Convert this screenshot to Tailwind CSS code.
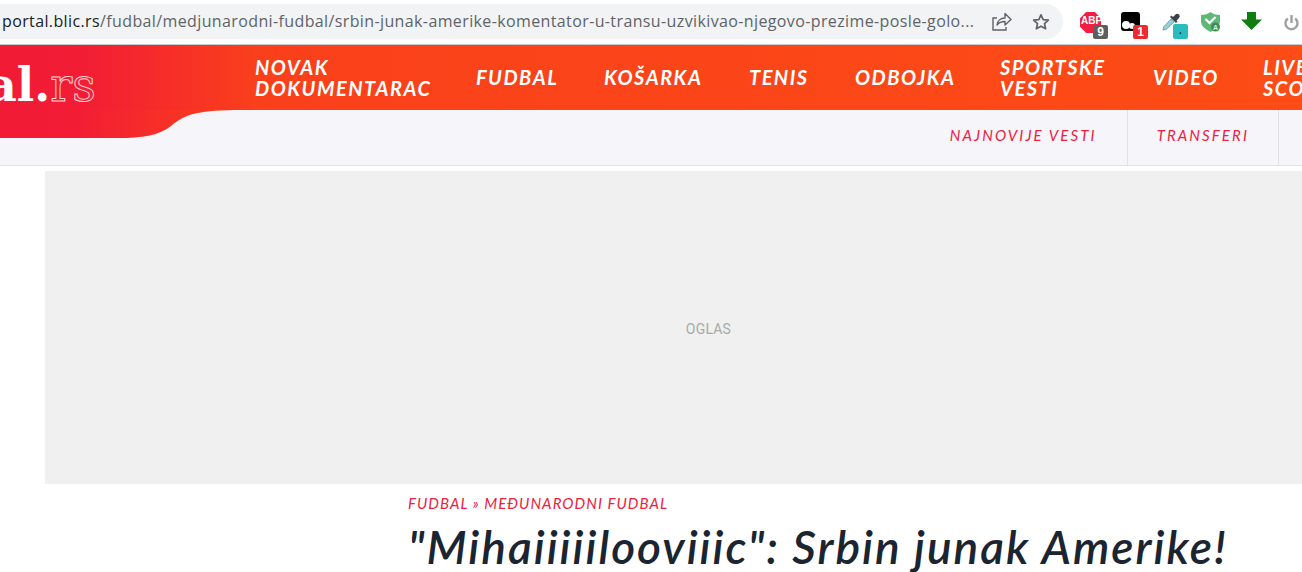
<!DOCTYPE html>
<html><head><meta charset="utf-8"><script src="https://cdn.jsdelivr.net/npm/@tailwindcss/browser@4"></script></head>
<body class="bg-white overflow-hidden font-['Open_Sans',sans-serif]">
<div class="w-[1302px] h-[572px] overflow-hidden relative">
  <div class="h-[45px] bg-white border-b border-[#c8cacc] flex items-start">
    <div class="w-[1063px] shrink-0 h-[35px] mt-[4px] bg-[#f1f3f4] rounded-r-full flex items-center justify-between pl-[2px] pr-[13px]">
      <div class="text-[16px] leading-[24px] mb-[2px] text-[#5f6368] whitespace-nowrap tracking-[0.38px] w-[975px] overflow-hidden"><span class="text-[#202124]">portal.blic.rs</span>/fudbal/medjunarodni-fudbal/srbin-junak-amerike-komentator-u-transu-uzvikivao-njegovo-prezime-posle-golo...</div>
      <div class="flex items-center gap-[20px]">
        <svg class="w-[20px] h-[19px]" viewBox="0 0 20 19" fill="none" stroke="#5f6368" stroke-width="1.400"><path d="M5 6H1v12h13v-3" stroke-linejoin="miter"/><path d="M5 13c.5-4 3.500-7 8-7V1.500l6 6-6 5.500V9.500c-3.500 0-6 1-8 3.500z" stroke-linejoin="round"/></svg>
        <svg class="w-[18px] h-[18px]" viewBox="0 0 20 20" fill="none" stroke="#5f6368" stroke-width="1.900"><path d="M10 2l2.400 5.300 5.800.6-4.300 3.900 1.200 5.700-5.100-2.900-5.100 2.900 1.200-5.700L1.800 7.900l5.800-.6z" stroke-linejoin="round"/></svg>
      </div>
    </div>
    <div class="flex items-start mt-[12px] ml-[17px]">
      <div class="relative w-[28px] h-[27px]">
        <svg class="w-[21px] h-[21px]" viewBox="0 0 22 22"><path d="M6.500 0h9L22 6.500v9L15.500 22h-9L0 15.500v-9z" fill="#f21d43"/></svg>
        <span class="absolute left-[1px] top-[3px] text-[10px] leading-[12px] font-bold text-white font-['Liberation_Sans',sans-serif]">ABP</span>
        <span class="absolute left-[13px] top-[13px] w-[15px] h-[14px] bg-[#5f5f5f] rounded-[2px] text-white text-[12px] leading-[14px] font-bold text-center font-['Liberation_Sans',sans-serif]">9</span>
      </div>
      <div class="relative w-[27px] h-[27px] ml-[13px]">
        <div class="absolute left-0 top-0 w-[19px] h-[19px] bg-black rounded-[3px]"></div>
        <div class="absolute left-[1px] top-[9px] w-[8px] h-[8px] bg-white rounded-full"></div>
        <div class="absolute left-[8px] top-[11px] w-[6px] h-[6px] bg-white rounded-full"></div>
        <span class="absolute left-[12px] top-[13px] w-[15px] h-[14px] bg-[#ee2a2e] rounded-[2px] text-white text-[12px] leading-[14px] font-bold text-center font-['Liberation_Sans',sans-serif]">1</span>
      </div>
      <div class="relative w-[26px] h-[27px] ml-[14px]">
        <svg class="absolute left-0 top-0 w-[19px] h-[19px]" viewBox="0 0 19 19"><path d="M1 18l.500-3L9 7l3 3-8 7.500z" fill="#8fd3dc" stroke="#6f8f96" stroke-width="0.800"/><path d="M8 5l6 6 1.500-1.500-1-1 2.500-2.500a2.300 2.300 0 0 0-3.500-3.500L11 5 9.500 3.500z" fill="#3c4043"/></svg>
        <span class="absolute left-[11px] top-[12px] w-[15px] h-[15px] bg-[#2bbcc0] rounded-[2px] text-[#123] text-[10px] leading-[13px] font-bold text-center font-['Liberation_Sans',sans-serif]">.</span>
      </div>
      <svg class="w-[20px] h-[20px] ml-[13px]" viewBox="0 0 20 20"><path d="M0 3c4 0 7-1 9.500-3C12 2 15 3 19 3v6c0 5-4 8-9.500 11C4 17 0 14 0 9z" fill="#5fb878"/><path d="M4.500 7l4 4 6-6" stroke="#fff" stroke-width="2.200" fill="none"/><circle cx="14.500" cy="15" r="4.500" fill="#3f8f58"/><text x="14.500" y="17.500" font-size="7" font-weight="700" fill="#d8f0de" text-anchor="middle" font-family="Liberation Sans">A</text></svg>
      <svg class="w-[21px] h-[18px] ml-[20px]" viewBox="0 0 21 18"><path d="M6 0h9v7.500h6L10.500 18 0 7.500h6z" fill="#0f7d12"/></svg>
      <svg class="w-[15px] h-[16px] ml-[22px] mt-[3px]" viewBox="0 0 15 16" fill="none" stroke="#a0a0a0" stroke-width="2.400"><path d="M3.800 3.500a6 6 0 1 0 7.400 0"/><path d="M7.500 0v8"/></svg>
    </div>
  </div>

  <header class="h-[65px] bg-[linear-gradient(90deg,#f21b36_0%,#f21c35_6%,#fa401b_20%,#fd4c15_100%)] flex items-center text-white font-['Lato',sans-serif] italic font-bold text-[20px] leading-[21px] tracking-[1.5px] whitespace-nowrap relative">
    <div class="w-[255px] shrink-0 h-[65px] overflow-hidden not-italic">
      <div class="flex items-baseline font-['DejaVu_Serif',serif] tracking-normal text-[46px] leading-[54px] mt-[13px] ml-[-13px]">
        <span class="font-bold">al.</span><span class="font-normal text-transparent [-webkit-text-stroke:1px_#ffd0d0]">rs</span>
      </div>
    </div>
    <a class="w-[221px] shrink-0">NOVAK<br>DOKUMENTARAC</a>
    <a class="w-[128px] shrink-0">FUDBAL</a>
    <a class="w-[145px] shrink-0">KOŠARKA</a>
    <a class="w-[106px] shrink-0">TENIS</a>
    <a class="w-[145px] shrink-0">ODBOJKA</a>
    <a class="w-[153px] shrink-0">SPORTSKE<br>VESTI</a>
    <a class="w-[110px] shrink-0">VIDEO</a>
    <a class="shrink-0">LIVE<br>SCORE</a>
  </header>

  <div class="h-[56px] bg-[#f6f5f9] border-b border-[#e3e2e5] flex justify-end items-stretch text-[#ee2040] font-['Lato',sans-serif] italic text-[15px] tracking-[2.1px] whitespace-nowrap relative">
    <svg class="absolute left-0 top-0 w-[240px] h-[29px]" viewBox="0 0 240 29"><defs><linearGradient id="g" x1="0" x2="240" y1="0" y2="0" gradientUnits="userSpaceOnUse"><stop offset="0" stop-color="#f21b36"/><stop offset="0.3" stop-color="#f21c35"/><stop offset="1" stop-color="#fa401b"/></linearGradient></defs><path d="M0 0V28H118C142 28 158 26 171 16C184 5 196 0.500 234 0z" fill="url(#g)"/></svg>
    <a class="flex items-center pr-[30px] pb-[4px] border-r border-[#e3dfe4]">NAJNOVIJE VESTI</a>
    <a class="flex items-center px-[29px] pb-[4px] border-r border-[#e3dfe4]">TRANSFERI</a>
    <div class="w-[23px]"></div>
  </div>

  <div class="mt-[5px] ml-[45px] h-[313px] bg-[#f0f0f0] flex items-center justify-center text-[14px] text-[#a9a9a9] font-['Roboto',sans-serif] tracking-[0.2px] pl-[70px] pt-[4px]">OGLAS</div>

  <div class="ml-[408px] mt-[10px] font-['Lato',sans-serif] italic text-[#ee2040] text-[15px] leading-[18px] tracking-[1.05px] whitespace-nowrap">FUDBAL » MEĐUNARODNI FUDBAL</div>
  <h1 class="ml-[408px] mt-[7px] font-['Lato',sans-serif] italic font-semibold text-[#1a2531] text-[46px] leading-[56px] tracking-[2px] whitespace-nowrap">"Mihaiiiiilooviiic": Srbin junak Amerike!</h1>
</div>
</body></html>
